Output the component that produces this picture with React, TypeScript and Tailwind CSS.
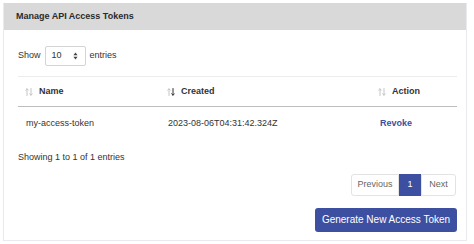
const SortIcon = ({ active }: { active?: boolean }) => (
  <svg width="8" height="8" viewBox="0 0 8 8" className="mr-[6px]">
    <g fill="none" strokeWidth="1" strokeLinecap="round" strokeLinejoin="round">
      <path d="M2 7.5 V0.8 M0.6 2.2 L2 0.8 L3.4 2.2" stroke="#c4c4c4" />
      <path d="M6 0.5 V7.2 M4.6 5.8 L6 7.2 L7.4 5.8" stroke={active ? "#333" : "#c4c4c4"} />
    </g>
  </svg>
);

const App = () => {
  return (
    <div
      className="h-[244px] w-[474px] bg-white pl-[3px] pr-[7px] pt-[3px] text-[#333]"
      style={{ fontFamily: '"Liberation Sans", Arial, sans-serif' }}
    >
      <div className="h-[238px] border border-[#e8eaee] border-t-0">
        {/* Header */}
        <div className="flex h-[27px] items-center bg-[#d9d9d9] px-[12px] text-[9px] font-bold text-[#2b2b2b]">
          Manage API Access Tokens
        </div>

        <div className="pl-[14px] pr-[9px]">
          {/* Show entries */}
          <div className="mt-[16px] flex h-[20px] items-center text-[9px]">
            <span>Show</span>
            <div className="mx-[4px] flex h-[20px] w-[41px] items-center justify-between rounded-[2px] border border-[#d4d4d4] pl-[6px] pr-[7px]">
              <span>10</span>
              <svg width="5" height="8" viewBox="0 0 5 8">
                <path d="M2.5 0.5 L4.6 3.2 H0.4 Z" fill="#444" />
                <path d="M2.5 7.5 L4.6 4.8 H0.4 Z" fill="#444" />
              </svg>
            </div>
            <span>entries</span>
          </div>

          {/* Table */}
          <div className="mt-[10px] border-t border-[#ececec] text-[9px]">
            <div className="flex h-[30px] items-center border-b border-[#bdbdbd] font-bold">
              <div className="flex w-[142px] items-center pl-[7px]">
                <SortIcon />
                Name
              </div>
              <div className="flex w-[211px] items-center pl-[7px]">
                <SortIcon active />
                Created
              </div>
              <div className="flex items-center pl-[7px]">
                <SortIcon />
                Action
              </div>
            </div>
            <div className="flex h-[33px] items-center">
              <div className="w-[142px] pl-[8px]">my-access-token</div>
              <div className="w-[211px] pl-[8px]">2023-08-06T04:31:42.324Z</div>
              <div className="pl-[9px] font-bold text-[#3d4fa1]">Revoke</div>
            </div>
          </div>

          {/* Info */}
          <div className="mt-[11px] text-[9px]">Showing 1 to 1 of 1 entries</div>

          {/* Pagination */}
          <div className="mt-[9px] flex justify-end pr-[1px]">
            <div className="flex h-[22px] text-[9px]">
              <div className="flex w-[48px] items-center justify-center rounded-l-[3px] border border-[#e3e3e3] text-[#666]">
                Previous
              </div>
              <div className="flex w-[22px] items-center justify-center bg-[#3d4fa1] text-white">1</div>
              <div className="flex w-[35px] items-center justify-center rounded-r-[3px] border border-[#e3e3e3] text-[#666]">
                Next
              </div>
            </div>
          </div>

          {/* Generate button */}
          <div className="mt-[12px] flex justify-end">
            <button className="flex h-[24px] w-[142px] items-center justify-center rounded-[3px] bg-[#3d4fa1] text-[10px] text-white">
              Generate New Access Token
            </button>
          </div>
        </div>
      </div>
    </div>
  );
};

export default App;
